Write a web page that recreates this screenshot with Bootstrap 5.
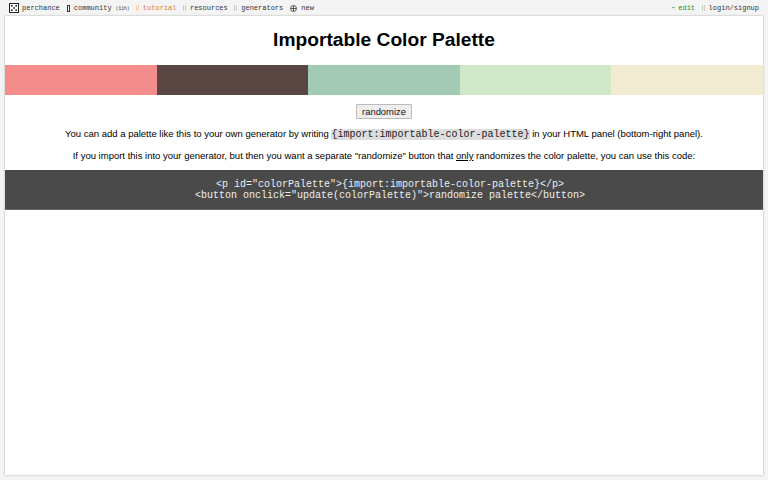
<!DOCTYPE html>
<html lang="en">
<head>
<meta charset="utf-8">
<title>Importable Color Palette</title>
<link rel="stylesheet" href="https://cdn.jsdelivr.net/npm/bootstrap@5.3.0/dist/css/bootstrap.min.css">
<style>
html,body{height:100%}
body{background:#f4f4f4;font-family:"Liberation Sans",Arial,sans-serif;color:#000;font-size:9.5px;display:flex;flex-direction:column;overflow:hidden}
.topbar{height:16px;padding:0 9px;font:7px/16px "Liberation Mono",monospace;color:#333}
.topbar a{color:#333;text-decoration:none;white-space:nowrap}
.topbar a.tut{color:#d9822b}
.topbar a.ed{color:#2f8a2f}
.dice{margin-right:3px}
.pencil{color:#2f8a2f;margin-right:3px;font-size:6px}
.tick{display:inline-block;height:6px;border:1px solid #ccc;border-width:0 1px;margin:0 4px 0 6.5px;box-sizing:content-box;width:1px}
.tick.orange{border-color:#f0cfa8}
.gap{margin:0 4px 0 7px}
.tiny{font-size:4.5px}
.sheet{margin:0 5px 5px;flex:1;background:#fff;box-shadow:0 0 2px rgba(0,0,0,.3)}
.ttl{font-size:19.2px;font-weight:700;line-height:22px;margin:0;padding:13px 0 14px}
.swatch{height:30px;flex:1}
.rand{font:9.4px/13px "Liberation Sans",sans-serif;padding:0 5px;border:1px solid #bbb;border-radius:1px;background:#eee;color:#111;height:15px;width:56px;display:block;margin:0 auto}
.txt{margin:9px 0 0;line-height:12px;font-size:9.5px}
.txt+.txt{margin-top:9px}
.cd{font-family:"Liberation Mono",monospace;font-size:10px;background:#ddd;border-radius:2px;color:#222}
.codebox{background:#4a4a4a;color:#eee;font:10px/11px "Liberation Mono",monospace;padding:9px 0 9px 12px;height:40px;white-space:pre;margin-top:8px;border-bottom:1px solid #666}
</style>
</head>
<body>
<nav class="topbar d-flex justify-content-between">
  <div class="d-flex align-items-center">
    <svg width="10" height="10" viewBox="0 0 10 10" class="dice"><rect x=".5" y=".5" width="9" height="9" fill="#fff" stroke="#222"/><g fill="#222"><rect x="2" y="2" width="1.6" height="1.6"/><rect x="6.4" y="2" width="1.6" height="1.6"/><rect x="4.2" y="4.2" width="1.6" height="1.6"/><rect x="2" y="6.4" width="1.6" height="1.6"/><rect x="6.4" y="6.4" width="1.6" height="1.6"/></g></svg>
    <a href="#">perchance</a>
    <svg width="3" height="7" viewBox="0 0 3 7" class="gap"><rect x=".5" y=".5" width="2" height="6" fill="none" stroke="#333"/></svg>
    <a href="#">community <span class="tiny">(11h)</span></a>
    <span class="tick orange"></span><a href="#" class="tut">tutorial</a>
    <span class="tick"></span><a href="#">resources</a>
    <span class="tick"></span><a href="#">generators</a>
    <svg width="7" height="7" viewBox="0 0 7 7" class="gap"><circle cx="3.5" cy="3.5" r="3" fill="none" stroke="#333" stroke-width=".8"/><path d="M3.5 1v5M1 3.5h5" stroke="#333" stroke-width=".8"/></svg>
    <a href="#">new</a>
  </div>
  <div class="d-flex align-items-center">
    <span class="pencil">✏</span><a href="#" class="ed">edit</a>
    <span class="tick"></span><a href="#">login/signup</a>
  </div>
</nav>
<main class="sheet">
  <h1 class="ttl text-center">Importable Color Palette</h1>
  <div class="d-flex">
    <div class="swatch" style="background:#f48c8c"></div>
    <div class="swatch" style="background:#594541"></div>
    <div class="swatch" style="background:#a2cab5"></div>
    <div class="swatch" style="background:#cfe8ca"></div>
    <div class="swatch" style="background:#f1ebd2"></div>
  </div>
  <div class="text-center" style="padding-top:9px"><button class="rand" type="button">randomize</button></div>
  <p class="txt text-center">You can add a palette like this to your own generator by writing <span class="cd">{import:importable-color-palette}</span> in your HTML panel (bottom-right panel).</p>
  <p class="txt text-center">If you import this into your generator, but then you want a separate "randomize" button that <u>only</u> randomizes the color palette, you can use this code:</p>
  <div class="codebox text-center">&lt;p id="colorPalette"&gt;{import:importable-color-palette}&lt;/p&gt;
&lt;button onclick="update(colorPalette)"&gt;randomize palette&lt;/button&gt;</div>
</main>
<script src="https://cdn.jsdelivr.net/npm/bootstrap@5.3.0/dist/js/bootstrap.bundle.min.js"></script>
</body>
</html>
